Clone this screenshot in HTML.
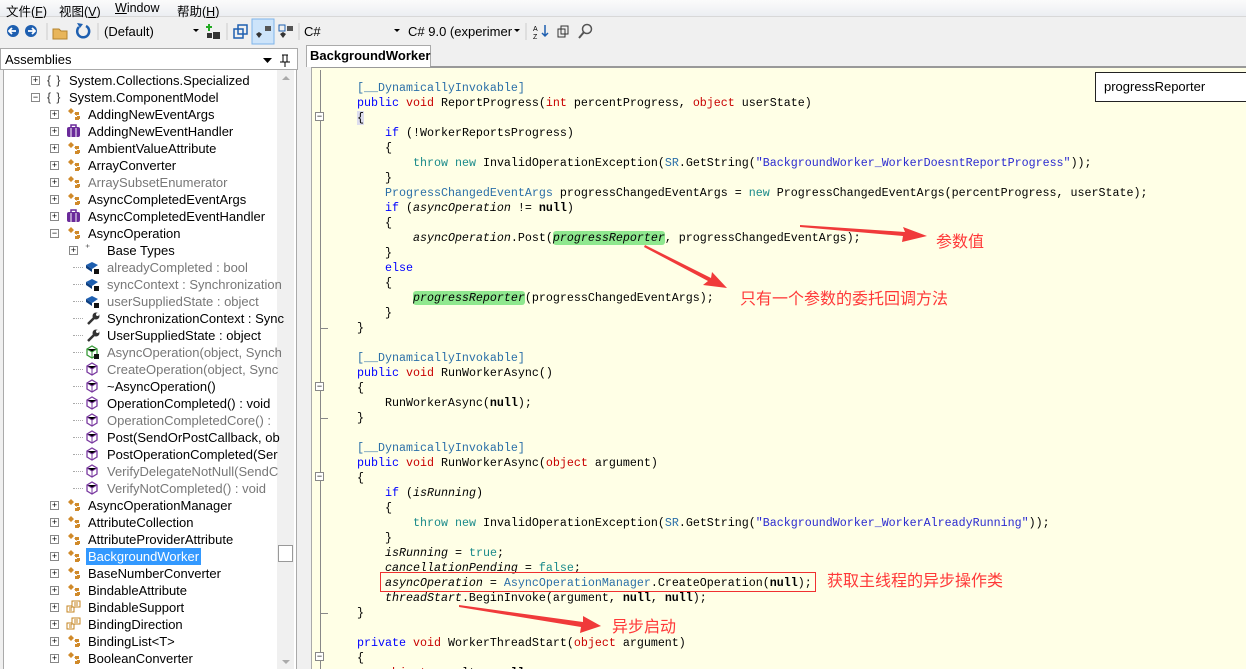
<!DOCTYPE html>
<html style="overflow:hidden"><head><meta charset="utf-8"><style>
*{margin:0;padding:0;box-sizing:border-box}
html,body{width:1246px;height:669px;overflow:hidden}
body{background:#f0f0f0;font-family:"Liberation Sans","Noto Sans CJK SC",sans-serif;font-size:13px;position:relative;color:#000}
.a{position:absolute;white-space:pre}
.menu{left:0;top:0;width:1246px;height:17px;background:linear-gradient(#fbfbfb,#eceef2);border-bottom:1px solid #d8d8d8}
.menu span{position:absolute;top:1px;font-size:12.5px}
.tb{top:18px;height:27px;width:1246px;background:#f0f0f0}
.tree{left:3px;top:70px;width:294px;height:599px;background:#fff;border-left:1px solid #aaa;border-right:1px solid #aaa}
.row{position:absolute;height:17px;line-height:17px;font-size:13px;white-space:pre}
.ex{position:absolute;width:9px;height:9px;border:1px solid #888;background:#fff;font-size:9px;line-height:7px;text-align:center;color:#000}
.code{left:311px;top:67px;width:935px;height:602px;background:#ffffe6;border-left:1px solid #aaa;border-top:1px solid #999}
pre{position:absolute;left:357px;top:81px;font-family:"Liberation Mono",monospace;font-size:11.67px;line-height:15px;color:#000}
.k{color:#0000ff}.r{color:#c80000}.t{color:#1a8a8a}.y{color:#2b6fa8}.s{color:#2a2ad0}.i{font-style:italic}.b{font-weight:bold}
.hl{background:#8fe88f;border-radius:3px}
.ann{color:#ff3838;font-size:16px;position:absolute;white-space:pre}
</style></head><body>
<div class="a menu"><span style="left:6px">文件(<u>F</u>)</span><span style="left:59px">视图(<u>V</u>)</span><span style="left:115px"><u>W</u>indow</span><span style="left:177px">帮助(<u>H</u>)</span></div>
<div class="a tb"></div>
<svg class="a" style="left:0;top:18px" width="640" height="27">
<circle cx="13" cy="13" r="6" fill="#1e5fb0"/><path d="M16 13H10M12 10l-3 3 3 3" stroke="#fff" stroke-width="1.8" fill="none"/>
<circle cx="31" cy="13" r="6" fill="#1e5fb0"/><path d="M28 13h6M32 10l3 3-3 3" stroke="#fff" stroke-width="1.8" fill="none"/>
<line x1="47" y1="5" x2="47" y2="22" stroke="#ccc"/>
<path d="M53 11h6l2 2h6v8H53z" fill="#e8b55a" stroke="#b5832e"/>
<path d="M86 8a6 6 0 1 1-7 1" stroke="#1e5fb0" stroke-width="2.5" fill="none"/><path d="M77 5l3 5 3-4z" fill="#1e5fb0"/>
<line x1="98" y1="5" x2="98" y2="22" stroke="#ccc"/>
<path d="M193 11l3 3 3-3z" fill="#000"/>
<rect x="207" y="15" width="5" height="5" fill="#333"/><rect x="213" y="14" width="7" height="7" fill="#333"/><path d="M209 6v7M206 9h6" stroke="#2a2" stroke-width="2"/>
<line x1="227" y1="5" x2="227" y2="22" stroke="#ccc"/>
<rect x="234" y="11" width="9" height="9" fill="none" stroke="#1e5fb0" stroke-width="1.5"/><rect x="238" y="7" width="9" height="9" fill="none" stroke="#1e5fb0" stroke-width="1.5"/>
<rect x="252" y="1" width="22" height="25" fill="#cde4fa" stroke="#7eb4ea"/>
<path d="M256 16l3-2 3 2-3 4z" fill="#333"/><rect x="265" y="8" width="6" height="5" fill="#555"/>
<path d="M280 16l3-2 3 2-3 4z" fill="#333"/><rect x="279" y="7" width="6" height="6" fill="none" stroke="#1e5fb0"/><rect x="287" y="8" width="6" height="5" fill="#555"/>
<line x1="299" y1="5" x2="299" y2="22" stroke="#ccc"/>
<path d="M394 11l3 3 3-3z" fill="#000"/><path d="M514 11l3 3 3-3z" fill="#000"/>
<line x1="526" y1="5" x2="526" y2="22" stroke="#ccc"/>
<text x="533" y="13" font-size="7" font-family="Liberation Sans">A</text><text x="533" y="21" font-size="7" font-family="Liberation Sans">Z</text><path d="M545 7v11M542 15l3 3 3-3" stroke="#1e5fb0" stroke-width="1.5" fill="none"/>
<rect x="558" y="11" width="7" height="8" fill="none" stroke="#333"/><rect x="561" y="8" width="7" height="8" fill="none" stroke="#333"/>
<circle cx="587" cy="11" r="4.5" fill="none" stroke="#555" stroke-width="1.5"/><path d="M584 14l-5 6" stroke="#555" stroke-width="2"/>
</svg>
<div class="a" style="left:104px;top:24px;font-size:13px">(Default)</div>
<div class="a" style="left:304px;top:24px;font-size:13px">C#</div>
<div class="a" style="left:408px;top:24px;font-size:13px">C# 9.0 (experimer</div>
<div class="a" style="left:0;top:48px;width:298px;height:22px;background:#fff;border:1px solid #aaa"></div>
<div class="a" style="left:5px;top:52px;font-size:13px">Assemblies</div>
<svg class="a" style="left:260px;top:52px" width="36" height="16"><path d="M3 6h9l-4.5 5z" fill="#000"/><path d="M22 3h6M23 3v7h4V3M20 10h10M25 10v5" stroke="#000" fill="none"/></svg>
<div class="a tree">
<div class="a" style="left:273px;top:0;width:17px;height:599px;background:#f0f0f0"></div>
<div class="a" style="left:274px;top:475px;width:15px;height:17px;background:#fff;border:1px solid #999"></div>
<svg class="a" style="left:277px;top:4px" width="10" height="8"><path d="M1 6l4-4 4 4z" fill="#aaa"/></svg>
<svg class="a" style="left:277px;top:588px" width="10" height="8"><path d="M1 2l4 4 4-4z" fill="#aaa"/></svg>
</div>
<div id="tv"></div>
<script>
var rows=[
[1,'+','ns','System.Collections.Specialized',0],[1,'-','ns','System.ComponentModel',0],
[2,'+','c','AddingNewEventArgs',0],[2,'+','d','AddingNewEventHandler',0],[2,'+','c','AmbientValueAttribute',0],[2,'+','c','ArrayConverter',0],[2,'+','c','ArraySubsetEnumerator',1],[2,'+','c','AsyncCompletedEventArgs',0],[2,'+','d','AsyncCompletedEventHandler',0],[2,'-','c','AsyncOperation',0],
[3,'+','bt','Base Types',0],[3,'','f','alreadyCompleted : bool',1],[3,'','f','syncContext : Synchronization',1],[3,'','f','userSuppliedState : object',1],[3,'','p','SynchronizationContext : Sync',0],[3,'','p','UserSuppliedState : object',0],[3,'','m','AsyncOperation(object, Synch',1],[3,'','mp','CreateOperation(object, Sync',1],[3,'','mp','~AsyncOperation()',0],[3,'','mp','OperationCompleted() : void',0],[3,'','mp','OperationCompletedCore() :',1],[3,'','mp','Post(SendOrPostCallback, ob',0],[3,'','mp','PostOperationCompleted(Ser',0],[3,'','mp','VerifyDelegateNotNull(SendC',1],[3,'','mp','VerifyNotCompleted() : void',1],
[2,'+','c','AsyncOperationManager',0],[2,'+','c','AttributeCollection',0],[2,'+','c','AttributeProviderAttribute',0],[2,'+','c','BackgroundWorker',2],[2,'+','c','BaseNumberConverter',0],[2,'+','c','BindableAttribute',0],[2,'+','e','BindableSupport',0],[2,'+','e','BindingDirection',0],[2,'+','c','BindingList<T>',0],[2,'+','c','BooleanConverter',0]];
var h='';
var ico={ns:'<div style="font-size:12px;color:#333;letter-spacing:1px">{ }</div>',
c:'<svg width="16" height="14"><path d="M2 4l3-3 3 3-3 3z M8 6h3v3h3v3h-3v-3" fill="#d08a2a"/><rect x="9" y="5" width="4" height="3" fill="#d08a2a"/><rect x="9" y="10" width="4" height="3" fill="#d08a2a"/></svg>',
d:'<svg width="16" height="14"><rect x="1" y="3" width="13" height="10" rx="2" fill="#6a2a9a"/><rect x="5" y="1" width="5" height="3" fill="none" stroke="#6a2a9a" stroke-width="1.5"/><path d="M5 4v9M10 4v9" stroke="#fff"/></svg>',
e:'<svg width="16" height="14"><rect x="1" y="6" width="7" height="6" fill="none" stroke="#c48422"/><rect x="6" y="1" width="8" height="6" fill="#fff" stroke="#c48422"/><path d="M8 3h4M8 5h4M3 8h3M3 10h3" stroke="#c48422"/></svg>',
bt:'<div style="font-size:10px;color:#333">⁺</div>',
f:'<svg width="16" height="15"><path d="M1 5l6-3 6 3-6 4z" fill="#1e5fb0"/><path d="M1 5v3l6 4V9z" fill="#0d3f80"/><rect x="9" y="9" width="5" height="5" fill="#111"/></svg>',
p:'<svg width="16" height="15"><path d="M3 13l7-7" stroke="#333" stroke-width="2.5"/><circle cx="11" cy="5" r="3.5" fill="#333"/><circle cx="12.5" cy="3.5" r="1.5" fill="#fff"/></svg>',
m:'<svg width="16" height="15"><path d="M2 4l5-3 5 3v6l-5 3-5-3z" fill="#fff" stroke="#3a9a3a" stroke-width="1.3"/><path d="M2 4l5 3 5-3M7 7v6" stroke="#3a9a3a"/><rect x="9" y="9" width="5" height="5" fill="#111"/></svg>',
mp:'<svg width="16" height="15"><path d="M2 4l5-3 5 3v6l-5 3-5-3z" fill="#fff" stroke="#7a3aa0" stroke-width="1.3"/><path d="M2 4l5 3 5-3M7 7v6" stroke="#7a3aa0"/></svg>'};
for(var i=0;i<rows.length;i++){var r=rows[i],y=72+i*17,lv=r[0];var ex=[0,35,54,73][lv],ic=ex+12,tx=[0,69,88,107][lv];
if(r[1])h+='<div class="ex" style="left:'+(ex-4)+'px;top:'+(y+4)+'px">'+(r[1]=='+'?'+':'−')+'</div>';
else h+='<div class="a" style="left:'+(ex)+'px;top:'+(y+8)+'px;width:10px;border-top:1px dotted #aaa"></div>';
h+='<div class="a" style="left:'+ic+'px;top:'+(y+1)+'px">'+ico[r[2]]+'</div>';
var st=r[4]==1?'color:#777':(r[4]==2?'background:#3399ff;color:#fff;padding:0 2px;margin-left:-2px':'');
h+='<div class="row" style="left:'+tx+'px;top:'+y+'px;'+st+'">'+r[3].replace(/</g,'&lt;')+'</div>';}
document.getElementById('tv').innerHTML=h;
</script>
<div class="a" style="left:298px;top:45px;width:948px;height:624px;background:#f0f0f0"></div>
<div class="a" style="left:306px;top:45px;width:125px;height:22px;background:#fff;border:1px solid #aaa;border-bottom:none;font-weight:bold;font-size:13px;line-height:20px;padding-left:3px">BackgroundWorker</div>
<div class="a" style="left:430px;top:66px;width:816px;border-top:1px solid #999"></div>
<div class="a code"></div>
<div class="a" style="left:320px;top:70px;height:599px;border-left:1px solid #888"></div>
<div class="ex" style="left:315px;top:112px">−</div>
<div class="ex" style="left:315px;top:382px">−</div>
<div class="ex" style="left:315px;top:472px">−</div>
<div class="ex" style="left:315px;top:652px">−</div>
<div class="a" style="left:320px;top:328px;width:8px;border-top:1px solid #888"></div>
<div class="a" style="left:320px;top:418px;width:8px;border-top:1px solid #888"></div>
<div class="a" style="left:320px;top:613px;width:8px;border-top:1px solid #888"></div>
<pre><span class="y">[__DynamicallyInvokable]</span>
<span class="k">public</span> <span class="r">void</span> ReportProgress(<span class="r">int</span> percentProgress, <span class="r">object</span> userState)
<span style="background:#dde">{</span>
    <span class="k">if</span> (!WorkerReportsProgress)
    {
        <span class="t">throw</span> <span class="t">new</span> InvalidOperationException(<span class="y">SR</span>.GetString(<span class="s">"BackgroundWorker_WorkerDoesntReportProgress"</span>));
    }
    <span class="y">ProgressChangedEventArgs</span> progressChangedEventArgs = <span class="t">new</span> ProgressChangedEventArgs(percentProgress, userState);
    <span class="k">if</span> (<span class="i">asyncOperation</span> != <span class="b">null</span>)
    {
        <span class="i">asyncOperation</span>.Post(<span class="i hl">progressReporter</span>, progressChangedEventArgs);
    }
    <span class="k">else</span>
    {
        <span class="i hl">progressReporter</span>(progressChangedEventArgs);
    }
}

<span class="y">[__DynamicallyInvokable]</span>
<span class="k">public</span> <span class="r">void</span> RunWorkerAsync()
{
    RunWorkerAsync(<span class="b">null</span>);
}

<span class="y">[__DynamicallyInvokable]</span>
<span class="k">public</span> <span class="r">void</span> RunWorkerAsync(<span class="r">object</span> argument)
{
    <span class="k">if</span> (<span class="i">isRunning</span>)
    {
        <span class="t">throw</span> <span class="t">new</span> InvalidOperationException(<span class="y">SR</span>.GetString(<span class="s">"BackgroundWorker_WorkerAlreadyRunning"</span>));
    }
    <span class="i">isRunning</span> = <span class="t">true</span>;
    <span class="i">cancellationPending</span> = <span class="t">false</span>;
    <span class="i">asyncOperation</span> = <span class="y">AsyncOperationManager</span>.CreateOperation(<span class="b">null</span>);
    <span class="i">threadStart</span>.BeginInvoke(argument, <span class="b">null</span>, <span class="b">null</span>);
}

<span class="k">private</span> <span class="r">void</span> WorkerThreadStart(<span class="r">object</span> argument)
{
    <span class="r">object</span> result = <span class="b">null</span>;</pre>
<div class="a" style="left:1095px;top:72px;width:151px;height:30px;background:#fff;border:1px solid #222;border-right:none;font-family:'Liberation Sans',sans-serif;font-size:13px;line-height:28px;padding-left:8px">progressReporter</div>
<div class="a" style="left:380px;top:572px;width:436px;height:20px;border:1px solid #f03030"></div>
<svg class="a" style="left:0;top:0" width="1246" height="669">
<path d="M800 225L905 232L903 227L927 236L902 242L903 236L800 227z" fill="#f03a3a"/>
<path d="M645 245L711 278L712 272L727 288L703 285L708 281L644 247z" fill="#f03a3a"/>
<path d="M459 605L583 622L583 616L601 626L580 633L581 627L459 607z" fill="#f03a3a"/>
</svg>
<div class="ann" style="left:936px;top:228px">参数值</div>
<div class="ann" style="left:740px;top:285px">只有一个参数的委托回调方法</div>
<div class="ann" style="left:827px;top:567px">获取主线程的异步操作类</div>
<div class="ann" style="left:612px;top:613px">异步启动</div>
</body></html>
